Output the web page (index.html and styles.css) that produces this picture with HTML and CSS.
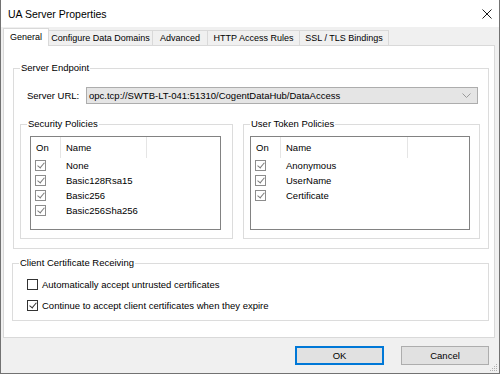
FILE: index.html
```html
<!DOCTYPE html>
<html>
<head>
<meta charset="utf-8">
<link rel="stylesheet" href="styles.css">
</head>
<body>
<div class="window">
  <div class="titlebar">
    <span class="title">UA Server Properties</span>
    <svg class="close" width="10" height="10" viewBox="0 0 10 10"><path d="M0.5 0.5 L9.5 9.5 M9.5 0.5 L0.5 9.5" stroke="#1a1a1a" stroke-width="1" fill="none"/></svg>
  </div>
  <div class="body">
    <div class="tabs">
      <div class="tab active t-general">General</div>
      <div class="tab t-conf">Configure Data Domains</div>
      <div class="tab t-adv">Advanced</div>
      <div class="tab t-http">HTTP Access Rules</div>
      <div class="tab t-ssl">SSL / TLS Bindings</div>
    </div>
    <div class="panel">
      <div class="group endpoint">
        <span class="caption">Server Endpoint</span>
        <div class="url-row">
          <span class="url-label">Server URL:</span>
          <div class="combo">
            <span class="combo-text">opc.tcp://SWTB-LT-041:51310/CogentDataHub/DataAccess</span>
            <svg class="chevron" width="9" height="5" viewBox="0 0 9 5"><path d="M0.5 0.5 L4.5 4.5 L8.5 0.5" stroke="#9a9a9a" stroke-width="1" fill="none"/></svg>
          </div>
        </div>
        <div class="policy-row">
          <div class="group sec">
            <span class="caption">Security Policies</span>
            <div class="list sec-list">
              <div class="list-head">
                <span class="col-on">On</span>
                <span class="col-name">Name</span>
              </div>
              <div class="list-row"><span class="cb-cell"><span class="cb cb-list checked"></span></span><span>None</span></div>
              <div class="list-row"><span class="cb-cell"><span class="cb cb-list checked"></span></span><span>Basic128Rsa15</span></div>
              <div class="list-row"><span class="cb-cell"><span class="cb cb-list checked"></span></span><span>Basic256</span></div>
              <div class="list-row"><span class="cb-cell"><span class="cb cb-list checked"></span></span><span>Basic256Sha256</span></div>
            </div>
          </div>
          <div class="group tok">
            <span class="caption">User Token Policies</span>
            <div class="list tok-list">
              <div class="list-head">
                <span class="col-on">On</span>
                <span class="col-name">Name</span>
              </div>
              <div class="list-row"><span class="cb-cell"><span class="cb cb-list checked"></span></span><span>Anonymous</span></div>
              <div class="list-row"><span class="cb-cell"><span class="cb cb-list checked"></span></span><span>UserName</span></div>
              <div class="list-row"><span class="cb-cell"><span class="cb cb-list checked"></span></span><span>Certificate</span></div>
            </div>
          </div>
        </div>
      </div>
      <div class="group client">
        <span class="caption">Client Certificate Receiving</span>
        <div class="check-line first"><span class="cb cb-dark"></span><span>Automatically accept untrusted certificates</span></div>
        <div class="check-line"><span class="cb cb-dark checked"></span><span>Continue to accept client certificates when they expire</span></div>
      </div>
    </div>
    <div class="buttons">
      <div class="btn default">OK</div>
      <div class="btn">Cancel</div>
    </div>
    <svg class="grip" width="8" height="8" viewBox="0 0 8 8">
      <rect x="6" y="0" width="1" height="1" fill="#b0b0b0"/>
      <rect x="4" y="2" width="1" height="1" fill="#b0b0b0"/><rect x="6" y="2" width="1" height="1" fill="#b0b0b0"/>
      <rect x="2" y="4" width="1" height="1" fill="#b0b0b0"/><rect x="4" y="4" width="1" height="1" fill="#b0b0b0"/><rect x="6" y="4" width="1" height="1" fill="#b0b0b0"/>
      <rect x="0" y="6" width="1" height="1" fill="#b0b0b0"/><rect x="2" y="6" width="1" height="1" fill="#b0b0b0"/><rect x="4" y="6" width="1" height="1" fill="#b0b0b0"/><rect x="6" y="6" width="1" height="1" fill="#b0b0b0"/>
    </svg>
  </div>
</div>
</body>
</html>
```
FILE: styles.css
```css
* { box-sizing: border-box; }
html, body { margin: 0; padding: 0; }
body {
  font-family: "Liberation Sans", Arial, sans-serif;
  font-size: 9.5px;
  color: #000;
  background: #fff;
}
.window {
  width: 500px;
  height: 374px;
  border-left: 1px solid #727272;
  border-right: 1px solid #727272;
  border-bottom: 1px solid #727272;
  display: flex;
  flex-direction: column;
}
.titlebar {
  height: 27px;
  background: #fff;
  display: flex;
  align-items: center;
  padding-left: 7px;
  padding-right: 7px;
}
.title { font-size: 10.5px; flex: 1; color: #000; }
.close { display: block; }
.body {
  flex: 1;
  background: #f0f0f0;
  position: relative;
  padding-top: 1px;
}
.tabs {
  display: flex;
  height: 17px;
  margin-left: 2px;
  align-items: flex-start;
  font-size: 9px;
}
.tab {
  height: 15px;
  margin-top: 2px;
  border: 1px solid #d9d9d9;
  border-bottom: none;
  border-left: none;
  background: #f0f0f0;
  display: flex;
  align-items: center;
  justify-content: center;
  white-space: nowrap;
}
.tab.active {
  height: 18px;
  margin-top: 0;
  background: #fff;
  border-left: 1px solid #d9d9d9;
  position: relative;
  z-index: 1;
  padding-bottom: 2px;
}
.t-general { width: 46px; }
.t-conf { width: 104px; }
.t-adv { width: 55px; }
.t-http { width: 92px; }
.t-ssl { width: 89px; }
.panel {
  margin-left: 2px;
  width: 492px;
  height: 293px;
  background: #fff;
  border: 1px solid #d9d9d9;
  padding-top: 22px;
}
.group {
  position: relative;
  border: 1px solid #dcdcdc;
}
.caption {
  position: absolute;
  top: -7px;
  left: 6px;
  background: #fff;
  padding: 0 1px;
  line-height: 12px;
  white-space: nowrap;
}
.endpoint {
  margin-left: 9px;
  width: 476px;
  height: 181px;
}
.url-row {
  display: flex;
  align-items: center;
  margin-top: 18px;
  padding-left: 13px;
}
.url-label { width: 59px; }
.combo {
  width: 392px;
  height: 17px;
  background: #e5e5e5;
  border: 1px solid #adadad;
  display: flex;
  align-items: center;
  padding-left: 2px;
  padding-right: 6px;
}
.combo-text { flex: 1; white-space: nowrap; }
.policy-row {
  display: flex;
  gap: 10px;
  margin-top: 20px;
  margin-left: 6px;
}
.sec { width: 213px; height: 115px; }
.tok { width: 237px; height: 115px; }
.list {
  border: 1px solid #828282;
  height: 94px;
  margin-top: 11px;
  background: #fff;
}
.sec-list { margin-left: 9px; width: 191px; }
.tok-list { margin-left: 6px; width: 220px; }
.list-head {
  display: flex;
  height: 21px;
  align-items: stretch;
}
.col-on {
  width: 30px;
  padding-left: 5px;
  display: flex;
  align-items: center;
  border-right: 1px solid #e5e5e5;
}
.col-name {
  display: flex;
  align-items: center;
  padding-left: 5px;
  border-right: 1px solid #e5e5e5;
}
.sec-list .col-name { width: 86px; }
.tok-list .col-name { width: 127px; }
.list-row {
  display: flex;
  align-items: center;
  height: 15px;
}
.cb-cell {
  width: 35px;
  padding-left: 4px;
  display: flex;
  align-items: center;
}
.cb {
  display: inline-block;
  width: 11px;
  height: 11px;
  border: 1px solid #333;
  background: #fff;
  position: relative;
  flex: none;
}
.cb-list { border-color: #8c8c8c; }
.cb.checked::after {
  content: "";
  position: absolute;
  left: 3px;
  top: 0px;
  width: 3px;
  height: 6px;
  border-right: 1px solid #333;
  border-bottom: 1px solid #333;
  transform: rotate(40deg);
}
.cb-list.checked::after { border-color: #7a7a7a; }
.client {
  margin-left: 8px;
  margin-top: 14px;
  width: 477px;
  height: 58px;
}
.check-line {
  display: flex;
  align-items: center;
  gap: 4px;
  padding-left: 14px;
  height: 14px;
  margin-top: 7px;
}
.check-line.first { margin-top: 13px; }
.buttons {
  display: flex;
  justify-content: flex-end;
  gap: 17px;
  margin-top: 8px;
  margin-right: 10px;
}
.btn {
  width: 88px;
  height: 19px;
  border: 1px solid #adadad;
  background: #e1e1e1;
  display: flex;
  align-items: center;
  justify-content: center;
}
.btn.default {
  width: 89px;
  border: 2px solid #0078d7;
}
.grip {
  position: absolute;
  right: 1px;
  bottom: 1px;
}
```
